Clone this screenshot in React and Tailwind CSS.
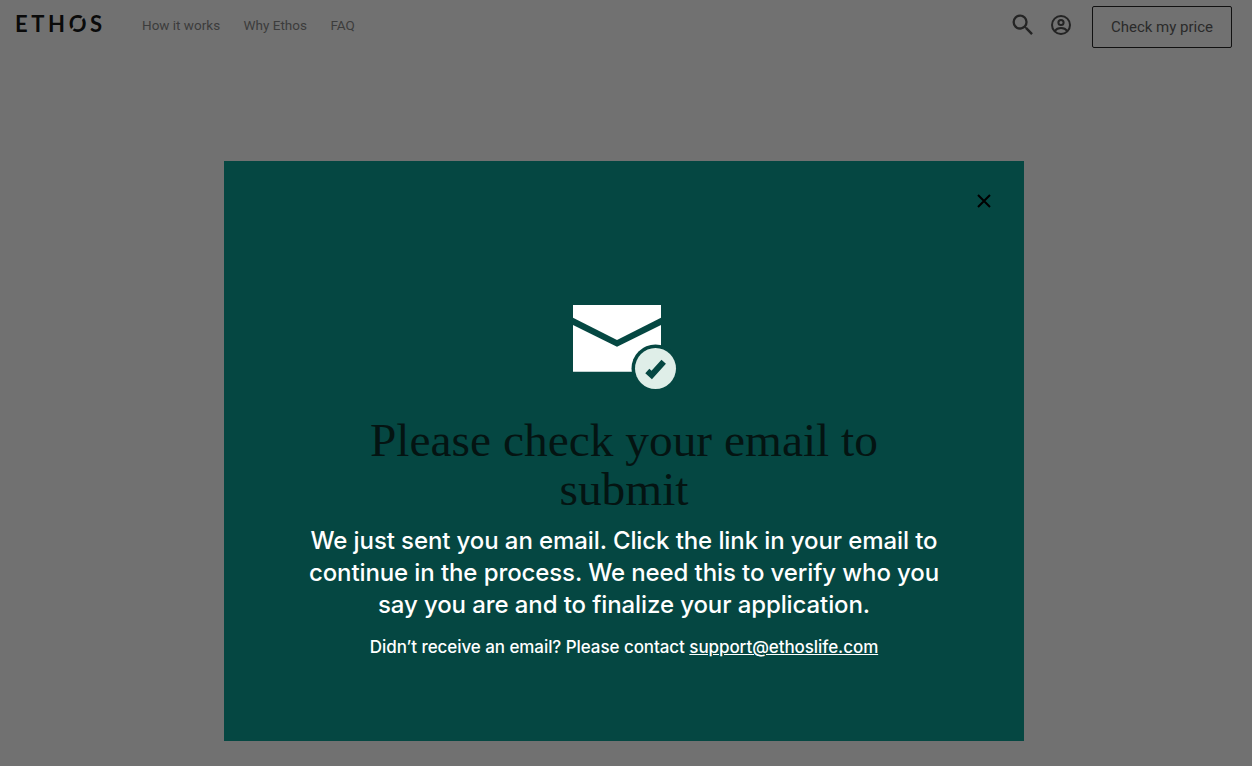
import React from "react";

function SearchIcon() {
  return (
    <svg width="28" height="28" viewBox="0 0 24 24" fill="#242424" className="block">
      <path d="M15.5 14h-.79l-.28-.27A6.47 6.47 0 0 0 16 9.5 6.5 6.5 0 1 0 9.5 16c1.61 0 3.09-.59 4.23-1.57l.27.28v.79l5 4.99L20.49 19l-4.99-5zm-6 0C7.01 14 5 11.99 5 9.5S7.01 5 9.5 5 14 7.01 14 9.5 11.99 14 9.5 14z" />
    </svg>
  );
}

function UserIcon() {
  return (
    <svg width="24" height="24" viewBox="0 0 24 24" fill="none" stroke="#242424" strokeWidth="2" className="block">
      <circle cx="12" cy="12" r="9" />
      <circle cx="12" cy="9.500" r="2.600" />
      <path d="M5.800 18c1.500-2.200 3.800-3 6.200-3s4.700.8 6.200 3" />
    </svg>
  );
}

function MailIcon() {
  return (
    <svg width="104" height="85" viewBox="0 0 104 85" className="block">
      <path d="M0 0H88V12.700L44 35 0 12.700Z" fill="#fff" />
      <path d="M0 20L44 41.700 88 20V66.700H0Z" fill="#fff" />
      <circle cx="82.500" cy="63.500" r="24" fill="#054742" />
      <circle cx="82.500" cy="63.500" r="20.500" fill="#dfeee8" />
      <path d="M74.300 66L78.700 70 90.700 56.700" fill="none" stroke="#054742" strokeWidth="6" />
    </svg>
  );
}

export default function App() {
  return (
    <div className="h-[766px] w-full overflow-hidden bg-[#717171] font-['Inter',sans-serif]">
      <header className="flex h-[53px] items-center justify-between pl-[15px] pr-[20px]">
        <div className="flex items-center">
          <span className="w-[127px] -translate-y-[3px] text-[22px] leading-none font-bold tracking-[0.165em] text-[#0a0a0a] font-['Lato',sans-serif]">
            ETH
            <span className="relative inline-block">
              O
              <span className="absolute right-[3px] top-[4px] h-[2px] w-[9px] -rotate-45 bg-[#717171]" />
              <span className="absolute bottom-[6px] left-[1px] h-[2px] w-[7px] -rotate-45 bg-[#717171]" />
            </span>
            S
          </span>
          <nav className="flex -translate-y-[1px] gap-[23.500px] text-[13.500px] text-[#3c3c3c] font-['Roboto',sans-serif]">
            <span>How it works</span>
            <span>Why Ethos</span>
            <span>FAQ</span>
          </nav>
        </div>
        <div className="flex items-center">
          <div className="-translate-y-[2px]"><SearchIcon /></div>
          <span className="ml-[12px] -translate-y-[2px]"><UserIcon /></span>
          <button className="ml-[19px] mt-[1px] h-[42px] w-[140px] rounded-[2px] border border-[#111] text-[15px] text-[#2a2a2a] font-['Roboto',sans-serif]">Check my price</button>
        </div>
      </header>
      <div className="relative ml-[224px] mt-[108px] flex h-[580px] w-[800px] flex-col items-center bg-[#054742]">
        <svg className="absolute right-[32px] top-[32px]" width="16" height="16" viewBox="0 0 16 16" fill="none" stroke="#000" strokeWidth="2">
          <path d="M2 2L14 14M14 2L2 14" />
        </svg>
        <div className="ml-[2px] mt-[144px]"><MailIcon /></div>
        <h1 className="mt-[26px] w-[560px] text-center text-[47.400px] leading-[49px] font-normal text-[#041412] font-['Liberation_Serif',serif]">Please check your email to submit</h1>
        <p className="mt-[11px] w-[640px] text-center text-[24px] leading-[32px] font-medium tracking-[-0.1px] text-white font-['Inter',sans-serif]">We just sent you an email. Click the link in your email to continue in the process. We need this to verify who you say you are and to finalize your application.</p>
        <p className="mt-[13px] text-center text-[17px] leading-[26px] font-medium tracking-[-0.07px] text-white font-['Inter',sans-serif]">Didn’t receive an email? Please contact <a className="underline">support@ethoslife.com</a></p>
      </div>
    </div>
  );
}
